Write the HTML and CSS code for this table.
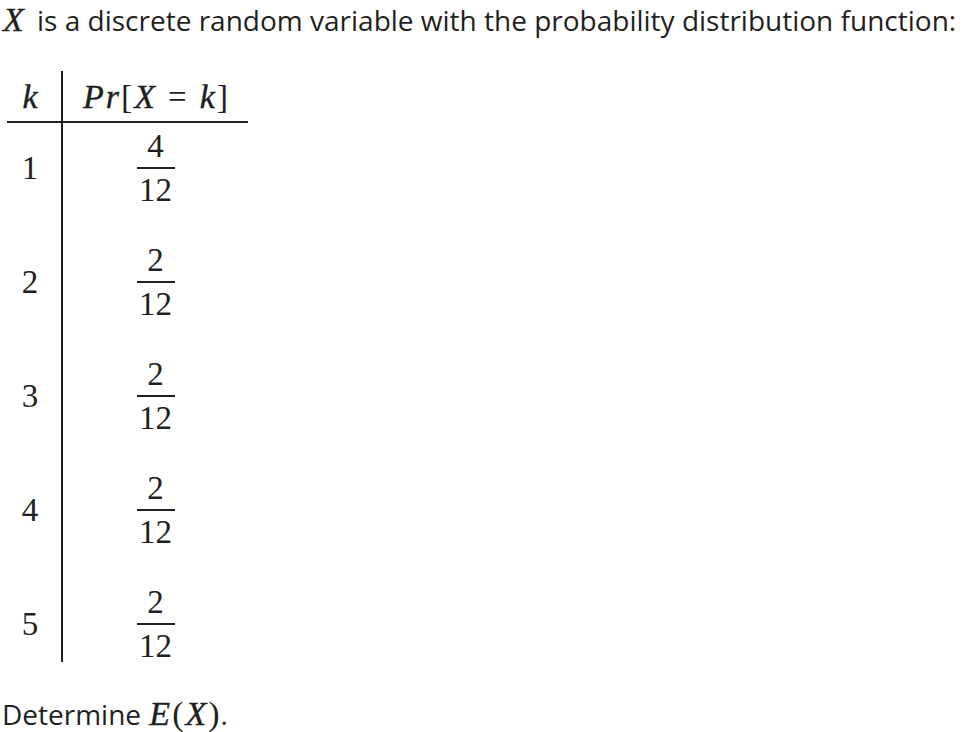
FILE: index.html
```html
<!DOCTYPE html>
<html>
<head>
<meta charset="utf-8">
<link rel="stylesheet" href="styles.css">
</head>
<body>
<p class="intro"><span class="mi">X</span> is a discrete random variable with the probability distribution function:</p>
<table class="dist">
  <thead>
    <tr><th class="kcol"><span class="mi">k</span></th><th class="pcol"><span class="mi">P</span><span class="mi">r</span><span class="mr">[</span><span class="mi">X</span><span class="mo">=</span><span class="mi">k</span><span class="mr">]</span></th></tr>
  </thead>
  <tbody>
    <tr><td class="kcol">1</td><td class="pcol"><span class="frac"><span class="num">4</span><span class="den">12</span></span></td></tr>
    <tr><td class="kcol">2</td><td class="pcol"><span class="frac"><span class="num">2</span><span class="den">12</span></span></td></tr>
    <tr><td class="kcol">3</td><td class="pcol"><span class="frac"><span class="num">2</span><span class="den">12</span></span></td></tr>
    <tr><td class="kcol">4</td><td class="pcol"><span class="frac"><span class="num">2</span><span class="den">12</span></span></td></tr>
    <tr><td class="kcol">5</td><td class="pcol"><span class="frac"><span class="num">2</span><span class="den">12</span></span></td></tr>
  </tbody>
</table>
<p class="ask">Determine <span class="mi">E</span><span class="mr">(</span><span class="mi">X</span><span class="mr">)</span>.</p>
</body>
</html>
```
FILE: styles.css
```css
html, body {
  margin: 0;
  padding: 0;
  background: #ffffff;
}
body {
  font-family: "Open Sans", sans-serif;
  font-size: 28px;
  color: #1f1f1f;
}
.intro {
  margin: 0;
  padding: 1px 0 0 2px;
  line-height: 38px;
}
.mi {
  font-family: "Liberation Serif", serif;
  font-style: italic;
  font-size: 34px;
  padding: 0 1px;
  -webkit-text-stroke: 0.4px #1f1f1f;
}
.mr {
  font-family: "Liberation Serif", serif;
  font-size: 34px;
  padding: 0 1px;
}
.intro .mi {
  margin-right: 5px;
}
.mo {
  margin: 0 12px;
}
.dist {
  margin: 32px 0 0 7px;
  border-collapse: collapse;
  font-family: "Liberation Serif", serif;
  font-size: 33px;
  color: #1f1f1f;
}
.dist th {
  font-weight: normal;
  padding: 13px 0 11px 0;
  line-height: 26px;
  border-bottom: 2px solid #1f1f1f;
  white-space: nowrap;
}
.dist .kcol {
  width: 46px;
  padding-right: 8px;
  padding-left: 0;
  text-align: center;
}
.dist .pcol {
  width: 185px;
  text-align: center;
  border-left: 2px solid #1f1f1f;
  padding-left: 0;
  padding-right: 0;
}
.dist td {
  padding-top: 40px;
  padding-bottom: 0;
  vertical-align: middle;
  line-height: 30px;
}
.dist tbody tr:first-child td {
  padding-top: 8px;
}
.dist tbody tr:last-child td {
  padding-bottom: 1px;
}
.frac {
  display: inline-flex;
  flex-direction: column;
  align-items: center;
  vertical-align: middle;
  line-height: 30px;
}
.num {
  width: 38px;
  padding-bottom: 6px;
  border-bottom: 2px solid #1f1f1f;
  text-align: center;
}
.den {
  padding-top: 6px;
}
.ask {
  margin: 0;
  padding: 33px 0 0 2px;
  line-height: 38px;
}
```
